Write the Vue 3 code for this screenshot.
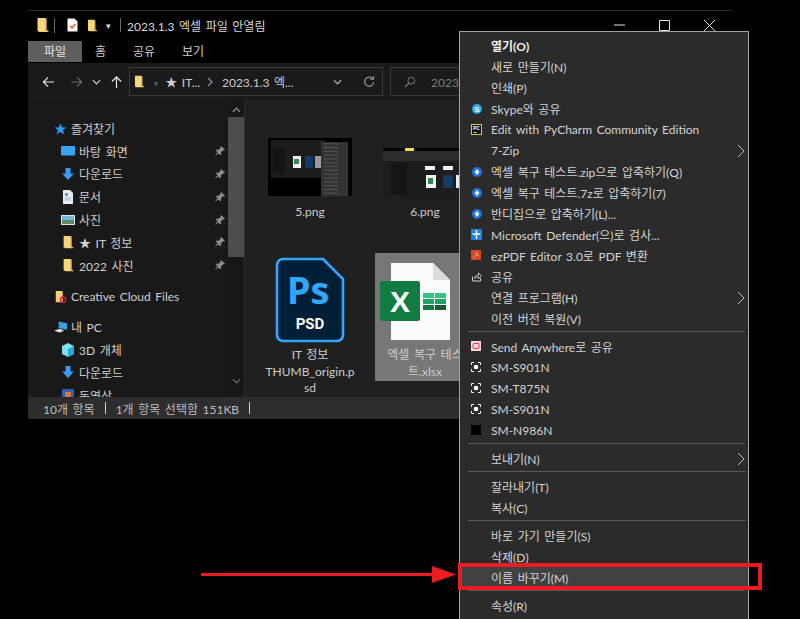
<template>
  <div class="desktop">
    <svg class="defs" width="0" height="0">
      <symbol id="folder" viewBox="0 0 12 16">
        <path d="M1 1h8l1 1v11l2 1v1H3l-2-1z" fill="#f5d67a" />
        <path d="M9 2l1 0v11l2 1.400H9z" fill="#c9a24a" />
      </symbol>
      <symbol id="arrowdown" viewBox="0 0 14 14">
        <path d="M4.500 1h5v5.500H13L7 13 1 6.500h3.500z" fill="#3b9af0" />
      </symbol>
      <symbol id="pin" viewBox="0 0 10 10">
        <path d="M6 .8l3.200 3.200-1 .6-.6-.2-1.800 1.800.2 1.500-.8.8-1.500-1.500L1 9l-.3-.3 2.300-2.700-1.500-1.500.8-.8 1.500.2 1.800-1.800-.2-.6z" fill="#8c8c8c" />
      </symbol>
      <symbol id="chev" viewBox="0 0 8 14">
        <path d="M1 1l6 6-6 6" fill="none" stroke="#bdbdbd" stroke-width="1" />
      </symbol>
    </svg>

    <section class="window">
      <header class="titlebar">
        <svg class="ic-large"><use href="#folder" /></svg>
        <i class="vline"></i>
        <svg class="ic-note" viewBox="0 0 11 14">
          <path d="M.5.500h7l3 3v10H.5z" fill="#fafafa" />
          <path d="M3 8l2 2 3.500-4" fill="none" stroke="#e8562a" stroke-width="1.300" />
        </svg>
        <svg class="ic-small"><use href="#folder" /></svg>
        <span class="caret">▾</span>
        <i class="vline second"></i>
        <span class="title">2023.1.3 엑셀 파일 안열림</span>
        <div class="winbtns">
          <svg viewBox="0 0 45 20"><path d="M17 10h11" stroke="#e5e5e5" /></svg>
          <svg viewBox="0 0 45 20"><path d="M17.500 5.500h10v10h-10z" fill="none" stroke="#e5e5e5" /></svg>
          <svg viewBox="0 0 45 20"><path d="M17 5l11 11M28 5L17 16" stroke="#e5e5e5" /></svg>
        </div>
      </header>

      <nav class="tabs">
        <span class="tab active">파일</span>
        <span class="tab">홈</span>
        <span class="tab">공유</span>
        <span class="tab">보기</span>
      </nav>

      <div class="addressrow">
        <svg class="nav-ic back" viewBox="0 0 14 12"><path d="M13 6H1.500M6.500 1l-5 5 5 5" fill="none" stroke="#e6e6e6" stroke-width="1.300" /></svg>
        <svg class="nav-ic fwd" viewBox="0 0 14 12"><path d="M1 6h11.500M7.500 1l5 5-5 5" fill="none" stroke="#6a6a6a" stroke-width="1.300" /></svg>
        <svg class="nav-ic down" viewBox="0 0 10 6"><path d="M1 1l4 4 4-4" fill="none" stroke="#d0d0d0" stroke-width="1.300" /></svg>
        <svg class="nav-ic up" viewBox="0 0 12 14"><path d="M6 13.500V1.500M1 6.500l5-5 5 5" fill="none" stroke="#e6e6e6" stroke-width="1.300" /></svg>
        <div class="addressbox">
          <svg class="ic-small"><use href="#folder" /></svg>
          <span class="crumb-more">«</span>
          <span class="crumb">★ IT...</span>
          <svg class="crumb-sep" viewBox="0 0 6 10"><path d="M1 1l4 4-4 4" fill="none" stroke="#8a8a8a" stroke-width="1.300" /></svg>
          <span class="crumb">2023.1.3 엑...</span>
          <svg class="addr-down" viewBox="0 0 10 6"><path d="M1 1l4 4 4-4" fill="none" stroke="#a8a8a8" stroke-width="1.400" /></svg>
          <svg class="refresh" viewBox="0 0 14 14"><path d="M11.500 3.500A5.300 5.300 0 1 0 12.500 7" fill="none" stroke="#8f8f8f" stroke-width="1.500" /><path d="M8 3.800h4.300V0" fill="none" stroke="#8f8f8f" stroke-width="1.400" /></svg>
        </div>
        <div class="searchbox">
          <svg class="search-ic" viewBox="0 0 14 14"><circle cx="8.500" cy="5.500" r="4" fill="none" stroke="#8a8a8a" /><path d="M5.500 8.500L1 13" stroke="#8a8a8a" stroke-width="1.200" /></svg>
          <span>2023.1.3 엑셀</span>
        </div>
      </div>

      <div class="body">
        <aside class="sidebar">
          <div v-for="row in sideRows" :key="row.label + row.cls" class="siderow" :class="row.cls">
            <span v-if="row.icon === 'star'" class="star">★</span>
            <svg v-else-if="row.icon === 'desk'" class="side-ic" viewBox="0 0 14 14"><rect y="2" width="14" height="9.500" fill="#36a4f5" /></svg>
            <svg v-else-if="row.icon === 'down'" class="side-ic"><use href="#arrowdown" /></svg>
            <svg v-else-if="row.icon === 'doc'" class="side-ic" viewBox="0 0 14 14"><path d="M2 0h7l3 3v11H2z" fill="#e9edf2" /><path d="M4 3h3v3H4z" fill="#5b9bd5" /><path d="M4 8h6M4 10h6" stroke="#9fb6cc" /></svg>
            <svg v-else-if="row.icon === 'pic'" class="side-ic" viewBox="0 0 14 14"><rect y="2" width="14" height="10" fill="#dfe6ea" /><rect x="1" y="3" width="12" height="4" fill="#79b7d8" /><rect x="1" y="7" width="12" height="4" fill="#5d8a63" /></svg>
            <svg v-else-if="row.icon === 'folder'" class="side-ic"><use href="#folder" /></svg>
            <svg v-else-if="row.icon === 'cc'" class="side-ic" viewBox="0 0 14 16"><path d="M1 1h7l1 1v12H1z" fill="#f2cf73" /><circle cx="9.500" cy="11" r="3" fill="none" stroke="#d8262c" stroke-width="1.600" /></svg>
            <svg v-else-if="row.icon === 'pc'" class="side-ic" viewBox="0 0 15 14"><path d="M5 1l9 2v7L5 8z" fill="#3aa0e8" /><path d="M0 11l6-2 5 2-5 2z" fill="#dfe3e6" /></svg>
            <svg v-else-if="row.icon === 'cube'" class="side-ic" viewBox="0 0 14 14"><path d="M7 0l6 3v8l-6 3-6-3V3z" fill="#7fe0ee" /><path d="M7 6l6-3v8l-6 3z" fill="#2aa5d8" /></svg>
            <svg v-else-if="row.icon === 'video'" class="side-ic" viewBox="0 0 14 14"><rect x="1" y="1" width="12" height="12" fill="#2f5fa8" /><rect x="4" y="4" width="6" height="6" fill="#d9773c" /></svg>
            <span class="sidelabel">{{ row.label }}</span>
            <svg v-if="row.pin" class="pin"><use href="#pin" /></svg>
          </div>
        </aside>

        <div class="scrollbar">
          <svg class="sb-arrow" viewBox="0 0 10 6"><path d="M1 5l4-4 4 4" fill="none" stroke="#9a9a9a" stroke-width="1.300" /></svg>
          <div class="thumb"></div>
          <svg class="sb-arrow bottom" viewBox="0 0 10 6"><path d="M1 1l4 4 4-4" fill="none" stroke="#6e6e6e" stroke-width="1.300" /></svg>
        </div>

        <main class="files">
          <div class="filegrid">
            <div class="tile cutoff"><div class="flabel">3.png</div></div>
            <div class="tile cutoff"><div class="flabel">4.png</div></div>

            <div class="tile thumbs">
              <div class="imgarea">
                <svg class="shot five" viewBox="0 0 84 58">
                  <rect width="84" height="58" fill="#000" />
                  <rect x="3" y="2" width="54" height="38" fill="#1c1c1c" />
                  <rect x="53" y="4" width="27" height="54" fill="#333" />
                  <rect x="25" y="18" width="8" height="12" fill="#f3f3f3" />
                  <rect x="26" y="21" width="5" height="5" fill="#2d8a4e" />
                  <rect x="37" y="18" width="8" height="12" fill="#123a66" />
                  <rect x="47" y="18" width="6" height="12" fill="#9a9a9a" />
                  <rect x="5" y="10" width="12" height="26" fill="#141414" />
                  <path v-for="y in 14" :key="y" :d="`M56 ${y * 3.800 + 2}h14`" stroke="#6d6d6d" stroke-width=".6" />
                </svg>
              </div>
              <div class="flabel">5.png</div>
            </div>
            <div class="tile thumbs">
              <div class="imgarea">
                <svg class="shot six" viewBox="0 0 84 50">
                  <rect width="84" height="50" fill="#1d1d1d" />
                  <rect width="84" height="3" fill="#000" />
                  <rect x="22" y="0" width="9" height="3" fill="#f4e04d" />
                  <rect y="3" width="84" height="10" fill="#2d2d2d" />
                  <rect x="8" y="15" width="16" height="32" fill="#151515" />
                  <rect x="42" y="18" width="10" height="4" fill="#f3f3f3" />
                  <rect x="60" y="18" width="10" height="4" fill="#f3f3f3" />
                  <rect x="43" y="27" width="10" height="13" fill="#f3f3f3" />
                  <rect x="45" y="30" width="5" height="6" fill="#2d8a4e" />
                  <rect x="60" y="27" width="10" height="13" fill="#123a66" />
                  <rect x="73" y="27" width="10" height="13" fill="#eee" />
                </svg>
              </div>
              <div class="flabel">6.png</div>
            </div>

            <div class="tile icon">
              <div class="imgarea">
                <svg class="psd" viewBox="0 0 70 86">
                  <path d="M8 2h40l20 20v56a6 6 0 0 1-6 6H8a6 6 0 0 1-6-6V8a6 6 0 0 1 6-6z" fill="#001e36" stroke="#31a8ff" stroke-width="2.600" />
                  <text x="33" y="47" text-anchor="middle" class="ps-mark">Ps</text>
                  <text x="35" y="72" text-anchor="middle" class="ps-type">PSD</text>
                </svg>
              </div>
              <div class="flabel">IT 정보<br />THUMB_origin.p<br />sd</div>
            </div>
            <div class="tile icon selected">
              <div class="imgarea">
                <svg class="xlsx" viewBox="0 0 70 80">
                  <path d="M11 1h42l17 17v60H11z" fill="#fbfbfb" />
                  <path d="M53 1l17 17H53z" fill="#dcdcdc" />
                  <rect x="43" y="31" width="11" height="5" fill="#33c481" />
                  <rect x="55" y="31" width="11" height="5" fill="#33c481" />
                  <rect x="43" y="37" width="11" height="5" fill="#21a366" />
                  <rect x="55" y="37" width="11" height="5" fill="#21a366" />
                  <rect x="43" y="43" width="11" height="5" fill="#107c41" />
                  <rect x="55" y="43" width="11" height="5" fill="#185c37" />
                  <rect y="19" width="40" height="40" rx="2" fill="#107c41" />
                  <text x="20" y="50" text-anchor="middle" class="xl-mark">X</text>
                </svg>
              </div>
              <div class="flabel nowrap">엑셀 복구 테스<br />트.xlsx</div>
            </div>
          </div>
        </main>
      </div>

      <footer class="status">
        <span>10개 항목</span>
        <i class="bar"></i>
        <span>1개 항목 선택함 151KB</span>
        <i class="bar"></i>
      </footer>
    </section>

    <ul class="menu">
      <template v-for="(item, i) in menuItems" :key="i">
        <li v-if="item.sep" class="sep"></li>
        <li v-else class="mitem" :class="{ bold: item.bold, hot: item.hot }">
          <span class="micon">
            <svg v-if="item.icon === 'skype'" viewBox="0 0 12 12"><circle cx="6" cy="6" r="5" fill="#2aa7e8" /><text x="6" y="9" text-anchor="middle" class="sk">S</text></svg>
            <svg v-else-if="item.icon === 'pycharm'" viewBox="0 0 12 12"><rect x=".5" y=".5" width="10" height="10" fill="#111" stroke="#d6c84a" /><text x="5.500" y="6" text-anchor="middle" class="pc">PC</text><path d="M2.500 8.500h3" stroke="#ddd" /></svg>
            <svg v-else-if="item.icon === 'zip'" viewBox="0 0 12 12"><circle cx="6" cy="6" r="5" fill="#1c74d8" /><path d="M6 3l2.500 3L6 9 3.500 6z" fill="#e8f2ff" /></svg>
            <svg v-else-if="item.icon === 'defender'" viewBox="0 0 12 12"><rect width="11" height="11" fill="#1a7fe0" /><path d="M5.500 1v9M1.500 5h8" stroke="#fff" stroke-width="1.400" /></svg>
            <svg v-else-if="item.icon === 'ezpdf'" viewBox="0 0 12 12"><rect width="10" height="10" fill="#d9481f" /><path d="M2.500 7.500c2-1 3-3 3-5 0 2 1 3 2.500 3.500" fill="none" stroke="#f6b9a0" /></svg>
            <svg v-else-if="item.icon === 'share'" viewBox="0 0 12 12"><path d="M1.500 5.500v4.500h8V7" fill="none" stroke="#cfcfcf" /><path d="M3.500 7.500c.5-2.500 2-3.500 4-3.500V2l3 2.800-3 2.700V6c-1.500 0-3 .3-4 1.500z" fill="none" stroke="#cfcfcf" stroke-width=".9" /></svg>
            <svg v-else-if="item.icon === 'send'" viewBox="0 0 12 12"><rect width="10" height="10" fill="#fbd7dd" /><rect x="2" y="2.500" width="6" height="5" rx="1" fill="none" stroke="#e8384f" /></svg>
            <svg v-else-if="item.icon === 'device'" viewBox="0 0 12 12"><path d="M.5 3V.5H3M7 .5h2.500V3M.5 7v2.500H3M7 9.500h2.500V7" fill="none" stroke="#f2f2f2" /><circle cx="5" cy="5" r="2.300" fill="#fff" /></svg>
            <svg v-else-if="item.icon === 'black'" viewBox="0 0 12 12"><rect width="10" height="10" fill="#000" /></svg>
          </span>
          <span class="mlabel">{{ item.label }}</span>
          <svg v-if="item.more" class="more"><use href="#chev" /></svg>
        </li>
      </template>
    </ul>

    <div class="callout-box"></div>
    <svg class="callout-arrow" viewBox="0 0 256 20">
      <path d="M1 9.500h232" stroke="#ed1c24" stroke-width="3" stroke-linecap="round" />
      <path d="M231 1l24 8.500-24 8.500z" fill="#ed1c24" />
    </svg>
  </div>
</template>

<script setup>
const sideRows = [
  { label: '즐겨찾기', icon: 'star', cls: 'head' },
  { label: '바탕 화면', icon: 'desk', cls: 'sub', pin: true },
  { label: '다운로드', icon: 'down', cls: 'sub', pin: true },
  { label: '문서', icon: 'doc', cls: 'sub', pin: true },
  { label: '사진', icon: 'pic', cls: 'sub', pin: true },
  { label: '★ IT 정보', icon: 'folder', cls: 'sub', pin: true },
  { label: '2022 사진', icon: 'folder', cls: 'sub', pin: true },
  { label: 'Creative Cloud Files', icon: 'cc', cls: 'head cloud' },
  { label: '내 PC', icon: 'pc', cls: 'head mypc' },
  { label: '3D 개체', icon: 'cube', cls: 'sub' },
  { label: '다운로드', icon: 'down', cls: 'sub second' },
  { label: '동영상', icon: 'video', cls: 'sub' }
]

const menuItems = [
  { label: '열기(O)', bold: true },
  { label: '새로 만들기(N)' },
  { label: '인쇄(P)' },
  { label: 'Skype와 공유', icon: 'skype' },
  { label: 'Edit with PyCharm Community Edition', icon: 'pycharm' },
  { label: '7-Zip', more: true },
  { label: '엑셀 복구 테스트.zip으로 압축하기(Q)', icon: 'zip' },
  { label: '엑셀 복구 테스트.7z로 압축하기(7)', icon: 'zip' },
  { label: '반디집으로 압축하기(L)...', icon: 'zip' },
  { label: 'Microsoft Defender(으)로 검사...', icon: 'defender' },
  { label: 'ezPDF Editor 3.0로 PDF 변환', icon: 'ezpdf' },
  { label: '공유', icon: 'share' },
  { label: '연결 프로그램(H)', more: true },
  { label: '이전 버전 복원(V)' },
  { sep: true },
  { label: 'Send Anywhere로 공유', icon: 'send' },
  { label: 'SM-S901N', icon: 'device' },
  { label: 'SM-T875N', icon: 'device' },
  { label: 'SM-S901N', icon: 'device' },
  { label: 'SM-N986N', icon: 'black' },
  { sep: true },
  { label: '보내기(N)', more: true },
  { sep: true },
  { label: '잘라내기(T)' },
  { label: '복사(C)' },
  { sep: true },
  { label: '바로 가기 만들기(S)' },
  { label: '삭제(D)' },
  { label: '이름 바꾸기(M)', hot: true },
  { sep: true },
  { label: '속성(R)' }
]
</script>

<style>
html, body {
  margin: 0;
  background: #000;
}
</style>

<style scoped>
.desktop {
  position: relative;
  width: 800px;
  height: 619px;
  overflow: hidden;
  background: #000;
  font-family: Lato, "Noto Sans CJK KR", sans-serif;
  font-size: 12px;
  word-spacing: 1.500px;
  color: #d6d6d6;
}
.defs {
  position: absolute;
}
svg {
  display: block;
  flex: none;
}
.window {
  position: absolute;
  left: 28px;
  top: 10px;
  width: 704px;
  height: 409px;
  display: flex;
  flex-direction: column;
  border-top: 1px solid #2a2a2a;
  box-sizing: border-box;
  background: #000;
}
.titlebar {
  height: 28px;
  display: flex;
  align-items: center;
  padding-left: 8px;
}
.ic-large {
  width: 13px;
  height: 16px;
}
.vline {
  width: 1px;
  height: 15px;
  background: #6a6a6a;
  margin-left: 5px;
}
.vline.second {
  margin-left: 9px;
  height: 14px;
}
.ic-note {
  width: 11px;
  height: 14px;
  margin-left: 12px;
}
.ic-small {
  width: 10px;
  height: 13px;
  margin-left: 9px;
}
.caret {
  font-size: 9px;
  margin-left: 9px;
  color: #ddd;
}
.title {
  margin-left: 6px;
  font-size: 12px;
  color: #d8d8d8;
}
.winbtns {
  margin-left: auto;
  display: flex;
}
.winbtns svg {
  width: 45px;
  height: 20px;
}
.tabs {
  height: 24px;
  display: flex;
  align-items: center;
}
.tab {
  line-height: 21px;
  text-align: center;
  color: #cfcfcf;
  font-size: 12px;
}
.tab.active {
  width: 54px;
  background: #5e5e5e;
  color: #e6e6e6;
}
.tab:nth-child(2) {
  width: 37px;
}
.tab:nth-child(3) {
  width: 50px;
}
.tab:nth-child(4) {
  width: 48px;
}
.addressrow {
  height: 37px;
  background: #1a1a1a;
  display: flex;
  align-items: center;
  position: relative;
}
.nav-ic.back {
  width: 13px;
  height: 12px;
  margin-left: 14px;
}
.nav-ic.fwd {
  width: 13px;
  height: 12px;
  margin-left: 15px;
}
.nav-ic.down {
  width: 9px;
  height: 6px;
  margin-left: 9px;
}
.nav-ic.up {
  width: 11px;
  height: 14px;
  margin-left: 10px;
}
.addressbox {
  width: 254px;
  height: 29px;
  margin-left: 7px;
  border: 1px solid #3a3a3a;
  box-sizing: border-box;
  display: flex;
  align-items: center;
  color: #cdcdcd;
}
.addressbox .ic-small {
  margin-left: 4px;
}
.crumb-more {
  margin-left: 10px;
  color: #8a8a8a;
  font-size: 10px;
}
.crumb {
  margin-left: 7px;
}
.crumb-sep {
  width: 6px;
  height: 10px;
  margin-left: 7px;
  margin-right: 2px;
}
.addr-down {
  width: 9px;
  height: 6px;
  margin-left: auto;
}
.refresh {
  width: 12px;
  height: 12px;
  margin-left: 21px;
  margin-right: 7px;
}
.searchbox {
  width: 120px;
  height: 29px;
  margin-left: 7px;
  border: 1px solid #3a3a3a;
  box-sizing: border-box;
  display: flex;
  align-items: center;
  color: #7c7c7c;
  white-space: nowrap;
}
.search-ic {
  width: 12px;
  height: 12px;
  margin-left: 13px;
  margin-right: 15px;
}
.body {
  flex: 1;
  min-height: 0;
  display: flex;
  overflow: hidden;
  background: #191919;
}
.sidebar {
  width: 200px;
  padding-top: 17px;
  overflow: hidden;
  flex: none;
}
.siderow {
  height: 22.800px;
  display: flex;
  align-items: center;
  padding-left: 33px;
  color: #cfcfcf;
  white-space: nowrap;
}
.siderow.head {
  padding-left: 26px;
}
.siderow.cloud {
  margin-top: 9px;
}
.siderow.mypc {
  margin-top: 7px;
}
.star {
  width: 14px;
  font-size: 13px;
  color: #2e9bf0;
  line-height: 1;
}
.side-ic {
  width: 14px;
  height: 14px;
}
.sidelabel {
  margin-left: 4px;
}
.head .sidelabel {
  margin-left: 3px;
}
.pin {
  width: 12px;
  height: 12px;
  margin-left: auto;
  margin-right: 2px;
}
.scrollbar {
  width: 16px;
  position: relative;
  flex: none;
  background: #171717;
}
.sb-arrow {
  width: 9px;
  height: 6px;
  margin: 7px auto 0;
}
.sb-arrow.bottom {
  position: absolute;
  left: 4px;
  top: 278px;
  margin: 0;
}
.thumb {
  height: 140px;
  background: #4d4d4d;
  margin-top: 4px;
}
.files {
  flex: 1;
  min-width: 0;
  border-left: 1px solid #2c2c2c;
  background: #202020;
  overflow: hidden;
}
.filegrid {
  display: grid;
  grid-template-columns: 100px 100px;
  column-gap: 15px;
  margin-top: -14px;
  padding-left: 15px;
}
.tile {
  text-align: center;
  color: #cdcdcd;
  font-size: 12px;
  line-height: 16.500px;
}
.tile.cutoff {
  height: 24px;
}
.tile.thumbs {
  height: 143px;
}
.tile.thumbs .imgarea {
  height: 94px;
  display: flex;
  align-items: flex-end;
  justify-content: center;
}
.tile.icon {
  height: 128px;
}
.tile.icon .imgarea {
  height: 94px;
  padding-top: 4px;
  box-sizing: border-box;
  display: flex;
  justify-content: center;
}
.tile.selected {
  background: #777;
  width: 100px;
}
.shot.five {
  width: 84px;
  height: 58px;
  margin-bottom: 8px;
}
.shot.six {
  width: 84px;
  height: 50px;
  margin-bottom: 6px;
}
.psd {
  width: 70px;
  height: 86px;
}
.xlsx {
  width: 70px;
  height: 80px;
  margin-top: 5px;
  margin-right: 20px;
}
.ps-mark {
  font-family: "Open Sans", sans-serif;
  font-weight: 700;
  font-size: 38px;
  fill: #31a8ff;
}
.ps-type {
  font-family: Roboto, sans-serif;
  font-weight: 700;
  font-size: 15px;
  fill: #fff;
}
.xl-mark {
  font-family: "Liberation Sans", sans-serif;
  font-weight: 700;
  font-size: 30px;
  fill: #fff;
}
.sk {
  font-family: "Liberation Sans", sans-serif;
  font-size: 8px;
  font-weight: 700;
  fill: #fff;
}
.pc {
  font-family: "Liberation Sans", sans-serif;
  font-size: 5px;
  font-weight: 700;
  fill: #fff;
}
.flabel.nowrap {
  white-space: nowrap;
}
.status {
  height: 22px;
  flex: none;
  background: #2d2d2d;
  display: flex;
  align-items: center;
  padding-left: 15px;
  color: #bdbdbd;
  position: relative;
}
.bar {
  width: 1px;
  height: 12px;
  background: #cfcfcf;
  margin: 0 10px;
}
.menu {
  position: absolute;
  left: 459px;
  top: 31px;
  width: 290px;
  box-sizing: border-box;
  margin: 0;
  padding: 3px 0 4px;
  list-style: none;
  background: #2b2b2b;
  border: 1px solid #a0a0a0;
  color: #d4d4d4;
}
.mitem {
  height: 21px;
  display: flex;
  align-items: center;
  white-space: nowrap;
}
.mitem.bold {
  font-weight: 700;
  color: #eee;
}
.mitem.hot {
  background: #414141;
}
.micon {
  width: 31px;
  flex: none;
  padding-left: 11px;
  box-sizing: border-box;
}
.micon svg {
  width: 12px;
  height: 12px;
}
.more {
  width: 8px;
  height: 14px;
  margin-left: auto;
  margin-right: 3px;
}
.sep {
  height: 7px;
  position: relative;
}
.sep::after {
  content: "";
  position: absolute;
  left: 8px;
  right: 3px;
  top: 2px;
  height: 1px;
  background: #5a5a5a;
}
.callout-box {
  position: absolute;
  left: 458px;
  top: 563px;
  width: 304px;
  height: 27px;
  box-sizing: border-box;
  border: 4px solid #ed1c24;
}
.callout-arrow {
  position: absolute;
  left: 201px;
  top: 565px;
  width: 256px;
  height: 20px;
}
</style>
